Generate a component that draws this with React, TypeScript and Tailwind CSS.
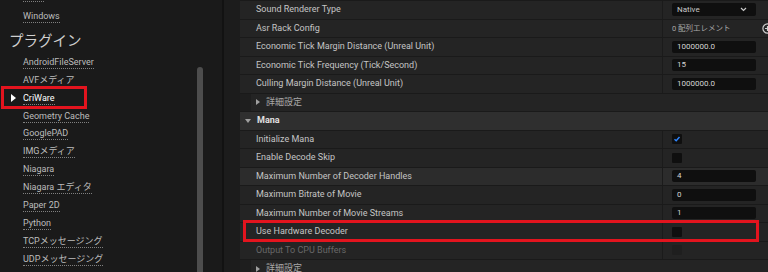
import React from "react";

const leftItems = [
  "AndroidFileServer",
  "AVFメディア",
  "CriWare",
  "Geometry Cache",
  "GooglePAD",
  "IMGメディア",
  "Niagara",
  "Niagara エディタ",
  "Paper 2D",
  "Python",
  "TCPメッセージング",
  "UDPメッセージング",
];

const font = { fontFamily: "Roboto, 'Noto Sans CJK JP', sans-serif" };

function LeftItem({ label, selected }: { label: string; selected?: boolean }) {
  return (
    <div className="relative flex h-[17.9px] shrink-0 items-center pl-[23px]">
      {selected && (
        <span className="absolute left-[11px] top-[5px] h-0 w-0 border-y-[4px] border-l-[5px] border-y-transparent border-l-white" />
      )}
      <span
        className={`border-b border-dotted border-[#808080] text-[9px] leading-[12px] ${
          selected ? "text-white" : "text-[#bdbdbd]"
        }`}
      >
        {label}
      </span>
    </div>
  );
}

function Checkbox({ checked, dim }: { checked?: boolean; dim?: boolean }) {
  return (
    <div
      className={`flex h-[10px] w-[10px] items-center justify-center rounded-[1px] ${
        dim ? "bg-[#1f1f1f]" : "bg-[#0f0f0f]"
      }`}
    >
      {checked && (
        <svg width="8" height="8" viewBox="0 0 8 8">
          <path d="M1.5 4.2 L3.2 5.8 L6.5 2" stroke="#2f86ff" strokeWidth="1.4" fill="none" />
        </svg>
      )}
    </div>
  );
}

function NumBox({ v }: { v: string }) {
  return (
    <div className="flex h-[12px] w-[84px] items-center rounded-[2px] bg-[#0f0f0f] pl-[5px] text-[8px] text-[#d4d4d4]">
      {v}
    </div>
  );
}

function Row({
  name,
  value,
  hover,
  disabled,
  children,
}: {
  name: string;
  value?: React.ReactNode;
  hover?: boolean;
  disabled?: boolean;
  children?: React.ReactNode;
}) {
  return (
    <div className={`relative flex h-[17.5px] shrink-0 ${hover ? "bg-[#2c2c2c]" : "bg-[#242424]"}`}>
      <div
        className={`flex w-[422px] items-center pl-[16px] text-[9px] ${
          disabled ? "text-[#686868]" : "text-[#c4c4c4]"
        }`}
      >
        {name}
      </div>
      <div className="w-px bg-[#1b1b1b]" />
      <div className="flex flex-1 items-center pl-[9px]">{value}</div>
      {children}
    </div>
  );
}

function Advanced() {
  return (
    <div className="flex h-[17.5px] shrink-0 bg-[#242424]">
      <div className="w-[11px] bg-[#1e1e1e]" />
      <div className="flex items-center pl-[5px] text-[9px] text-[#a8a8a8]">
        <span className="mr-[6px] h-0 w-0 border-y-[3.5px] border-l-[4px] border-y-transparent border-l-[#a0a0a0]" />
        詳細設定
      </div>
    </div>
  );
}

export default function App() {
  return (
    <div className="flex h-[272px] w-[768px] overflow-hidden bg-[#1a1a1a]" style={font}>
      {/* Left panel */}
      <div className="relative w-[222px] shrink-0 bg-[#1a1a1a]">
        <div className="flex flex-col">
          <div className="ml-[23px] mt-[1px] h-px w-[21px] shrink-0 border-b border-dotted border-[#808080]" />
          <div className="h-[6px] shrink-0" />
          <LeftItem label="Windows" />
          <div
            className="flex h-[27.5px] shrink-0 items-center pl-[9px] pt-[1px] text-[14.5px] text-[#cfcfcf]"
            style={{ fontFamily: "'Noto Sans CJK JP', sans-serif" }}
          >
            プラグイン
          </div>
          {leftItems.map((l) => (
            <LeftItem key={l} label={l} selected={l === "CriWare"} />
          ))}
        </div>
        {/* scrollbar */}
        <div className="absolute left-[197px] top-[67px] h-[220px] w-[6px] rounded-full bg-[#4d4d4d]" />
        {/* red highlight */}
        <div className="absolute left-[1px] top-[86px] h-[23px] w-[86px] border-[3px] border-[#e3141e]" />
      </div>
      <div className="w-[2px] shrink-0 bg-[#121212]" />
      <div className="w-[16px] shrink-0 bg-[#1c1c1c]" />
      {/* Details panel */}
      <div className="flex flex-1 flex-col gap-px bg-[#1a1a1a] pt-[1px]">
        <Row
          name="Sound Renderer Type"
          value={
            <div className="flex h-[13px] w-[84px] items-center justify-between rounded-[2px] bg-[#0f0f0f] pl-[5px] pr-[9px] text-[8px] text-[#c8c8c8]">
              Native
              <svg width="7" height="5" viewBox="0 0 7 5">
                <path d="M1 1 L3.5 3.5 L6 1" stroke="#c8c8c8" strokeWidth="1.2" fill="none" />
              </svg>
            </div>
          }
        />
        <Row
          name="Asr Rack Config"
          value={
            <div className="flex w-full items-center justify-between pr-[1px] text-[7.5px] text-[#a8a8a8]">
              <span>0 配列エレメント</span>
              <svg width="11" height="11" viewBox="0 0 11 11" className="-mr-[6px]">
                <circle cx="5.5" cy="5.5" r="4.6" stroke="#cfcfcf" strokeWidth="1.2" fill="none" />
                <path d="M5.5 3 V8 M3 5.5 H8" stroke="#cfcfcf" strokeWidth="1.2" />
              </svg>
            </div>
          }
        />
        <Row name="Economic Tick Margin Distance (Unreal Unit)" value={<NumBox v="1000000.0" />} />
        <Row name="Economic Tick Frequency (Tick/Second)" value={<NumBox v="15" />} />
        <Row name="Culling Margin Distance (Unreal Unit)" value={<NumBox v="1000000.0" />} />
        <Advanced />
        <div className="flex h-[17.5px] shrink-0 items-center bg-[#2f2f2f] text-[9px] font-bold text-[#e0e0e0]">
          <span className="ml-[5px] mr-[6px] h-0 w-0 border-x-[3px] border-t-[4px] border-x-transparent border-t-[#a0a0a0]" />
          Mana
        </div>
        <Row name="Initialize Mana" value={<Checkbox checked />} />
        <Row name="Enable Decode Skip" value={<Checkbox />} />
        <Row name="Maximum Number of Decoder Handles" hover value={<NumBox v="4" />} />
        <Row name="Maximum Bitrate of Movie" value={<NumBox v="0" />} />
        <Row name="Maximum Number of Movie Streams" value={<NumBox v="1" />} />
        <Row name="Use Hardware Decoder" value={<Checkbox />}>
          <div className="absolute left-[3px] top-[-3px] h-[22px] w-[516px] border-[3px] border-[#e3141e]" />
        </Row>
        <Row name="Output To CPU Buffers" disabled value={<Checkbox dim />} />
        <Advanced />
      </div>
    </div>
  );
}
